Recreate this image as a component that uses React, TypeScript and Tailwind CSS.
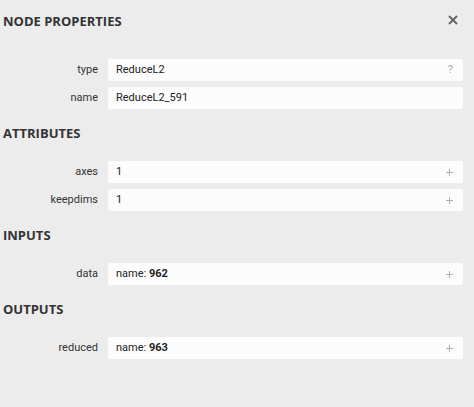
import React from "react";

function Title({ children, className = "" }: { children: React.ReactNode; className?: string }) {
  return (
    <div
      className={`h-[24px] flex items-center pl-[3px] text-[13px] font-bold text-[#333] font-['Open_Sans','Noto_Sans',sans-serif] ${className}`}
    >
      {children}
    </div>
  );
}

function Row({ label, children, icon }: { label: string; children: React.ReactNode; icon: "plus" | "q" | "none" }) {
  return (
    <div className="flex h-[22px] items-center">
      <div className="w-[98px] text-right text-[11px] text-[#333]">{label}</div>
      <div className="ml-[10px] w-[355px] h-[22px] rounded-[2px] bg-[#fcfcfc] flex items-center pl-[8px] pr-[8px] text-[11px] text-[#222]">
        <div className="flex-1">{children}</div>
        {icon === "plus" && (
          <svg width="7" height="7" viewBox="0 0 7 7" className="mr-[2px]">
            <path d="M3.5 0V7M0 3.5H7" stroke="#a9b0b8" strokeWidth="1" />
          </svg>
        )}
        {icon === "q" && <span className="text-[11px] text-[#aaa] mr-[2px]">?</span>}
      </div>
    </div>
  );
}

export default function App() {
  return (
    <div className="w-[474px] h-[407px] bg-[#ececec] relative font-['Roboto',sans-serif]">
      <div className="pt-[10px]">
        <Title>NODE PROPERTIES</Title>
      </div>
      <svg width="10" height="10" viewBox="0 0 10 10" className="absolute left-[448px] top-[15px]">
        <path d="M1 1L9 9M9 1L1 9" stroke="#666" strokeWidth="2" />
      </svg>
      <div className="mt-[25px] flex flex-col gap-[6px]">
        <Row label="type" icon="q">ReduceL2</Row>
        <Row label="name" icon="none">ReduceL2_591</Row>
      </div>
      <Title className="mt-[13px]">ATTRIBUTES</Title>
      <div className="mt-[15px] flex flex-col gap-[6px]">
        <Row label="axes" icon="plus">1</Row>
        <Row label="keepdims" icon="plus">1</Row>
      </div>
      <Title className="mt-[13px]">INPUTS</Title>
      <div className="mt-[15px] flex flex-col gap-[6px]">
        <Row label="data" icon="plus">
          name: <b>962</b>
        </Row>
      </div>
      <Title className="mt-[13px]">OUTPUTS</Title>
      <div className="mt-[15px] flex flex-col gap-[6px]">
        <Row label="reduced" icon="plus">
          name: <b>963</b>
        </Row>
      </div>
    </div>
  );
}
